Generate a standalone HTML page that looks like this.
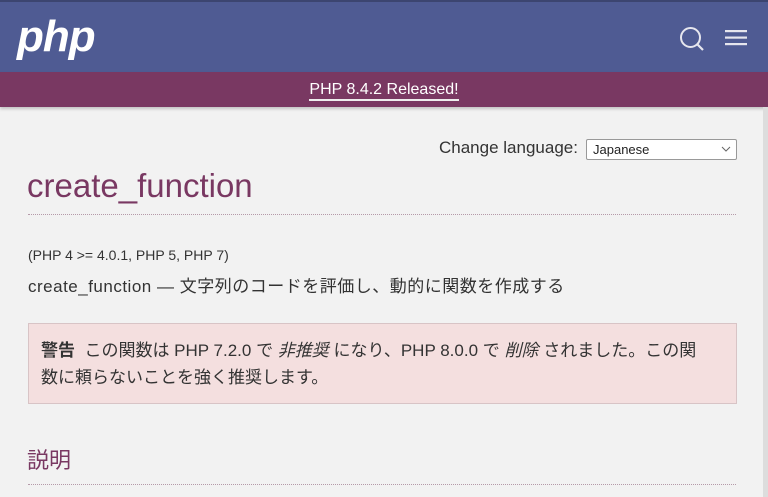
<!DOCTYPE html>
<html><head><meta charset="utf-8"><style>
*{margin:0;padding:0;box-sizing:border-box}
body{width:768px;height:497px;overflow:hidden;background:#f2f2f2;font-family:"Liberation Sans","Noto Sans CJK JP",sans-serif;color:#333;position:relative}
.hd{position:absolute;left:0;top:0;width:768px;height:72px;background:#4f5b93;border-top:2px solid #3c4570}
.logo{position:absolute;left:17px;top:10px;font:italic bold 44px "Liberation Sans",sans-serif;color:#fff;letter-spacing:-1px}
.bn{position:absolute;left:0;top:72px;width:768px;height:35px;background:#793862;text-align:center;box-shadow:0 2px 3px rgba(0,0,0,.2)}
.bn span{display:inline-block;margin-top:8px;color:#fff;font-size:16px;border-bottom:2px solid #eee;line-height:19px}
.a{position:absolute}
.sel{left:586px;top:139px;width:151px;height:21px;background:#fff;border:1px solid #999;border-radius:2px;font-size:13px;padding:2px 6px;color:#222}
.dot{position:absolute;left:28px;width:708px;border-top:1px dotted #b59aa9}
.warn{left:28px;top:323px;width:709px;height:81px;background:#f4dfdf;border:1px solid #d8c4c6;padding:13px 30px 13px 12px;font-size:17px;line-height:27px;color:#333}
.sb{position:absolute;right:0;top:107px;width:5px;height:390px;background:#ddd}
</style></head><body>
<div class="hd"><div class="logo">php</div>
<svg class="a" style="left:679px;top:24px" width="26" height="26" viewBox="0 0 26 26"><circle cx="11.5" cy="11.5" r="9.5" fill="none" stroke="#e6e6ee" stroke-width="2"/><path d="M18.5 18.5L24 24" stroke="#e6e6ee" stroke-width="2.2"/></svg>
<svg class="a" style="left:725px;top:27px" width="22" height="18"><rect y="1" width="22" height="2.2" fill="#e6e6ee"/><rect y="7.5" width="22" height="2.2" fill="#e6e6ee"/><rect y="14" width="22" height="2.2" fill="#e6e6ee"/></svg>
</div>
<div class="bn"><span>PHP 8.4.2 Released!</span></div>
<div class="sb"></div>
<div class="a" style="left:439px;top:138px;font-size:17px;color:#333">Change language:</div>
<div class="a sel">Japanese<svg style="position:absolute;right:5px;top:6px" width="10" height="7"><path d="M1 1l4 4 4-4" fill="none" stroke="#666"/></svg></div>
<div class="a" style="left:27px;top:167px;font-size:33px;color:#793862">create_function</div>
<div class="dot" style="top:214px"></div>
<div class="a" style="left:28px;top:247px;font-size:14px">(PHP 4 &gt;= 4.0.1, PHP 5, PHP 7)</div>
<div class="a" style="left:28px;top:272px;font-size:17px;letter-spacing:.5px">create_function — 文字列のコードを評価し、動的に関数を作成する</div>
<div class="a warn"><b>警告</b>&nbsp; この関数は PHP 7.2.0 で <i>非推奨</i> になり、PHP 8.0.0 で <i>削除</i> されました。この関数に頼らないことを強く推奨します。</div>
<div class="a" style="left:27px;top:443px;font-size:22px;color:#793862">説明</div>
<div class="dot" style="top:484px"></div>
</body></html>
